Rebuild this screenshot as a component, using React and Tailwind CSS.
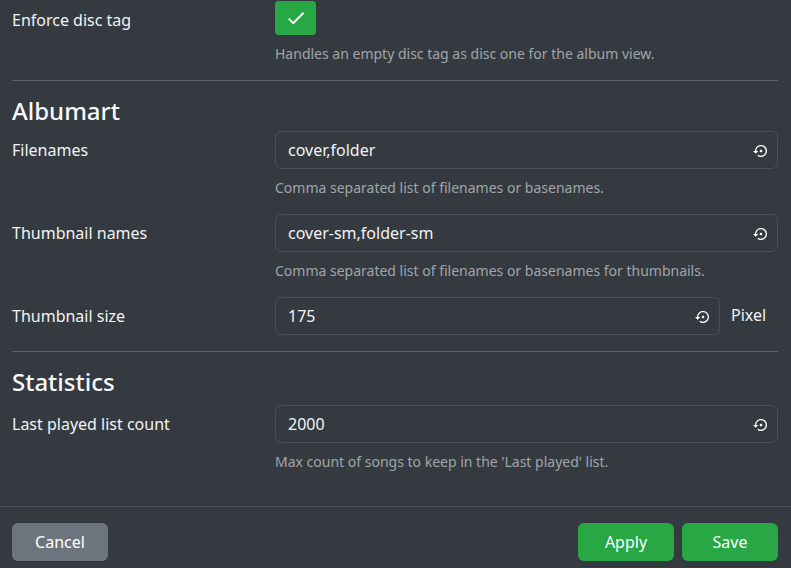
const font = { fontFamily: '"Noto Sans", sans-serif' };

function RestoreIcon() {
  return (
    <svg viewBox="0 0 24 24" className="w-4 h-4 fill-white shrink-0 translate-y-[1px]">
      <path d="M14 12c0-1.1-.9-2-2-2s-2 .9-2 2 .9 2 2 2 2-.9 2-2zm-2-9c-4.97 0-9 4.03-9 9H0l4 4 4-4H5c0-3.87 3.13-7 7-7s7 3.13 7 7-3.13 7-7 7c-1.51 0-2.91-.49-4.06-1.3l-1.42 1.44C8.04 20.3 9.94 21 12 21c4.97 0 9-4.03 9-9s-4.03-9-9-9z" />
    </svg>
  );
}

function Field({ label, value, help, unit }) {
  return (
    <div className="flex">
      <div className="w-[263px] shrink-0 h-[38px] flex items-center">{label}</div>
      <div className="flex-1 min-w-0">
        <div className="flex items-center">
          <div className="flex-1 h-[38px] flex items-center justify-between pl-[12px] pr-[8px] rounded-[6px] border border-[#495057] bg-[#343a40]">
            <span>{value}</span>
            <RestoreIcon />
          </div>
          {unit && <span className="w-[58px] pl-[11px] shrink-0 -translate-y-px">{unit}</span>}
        </div>
        {help && <div className="mt-[8px] text-[14px] leading-[21px] text-[#a1a5a9]">{help}</div>}
      </div>
    </div>
  );
}

export default function App() {
  return (
    <div style={font} className="h-[568px] w-[791px] overflow-hidden flex flex-col bg-[#343a40] text-[#f1f3f4] text-[16px] leading-[24px]">
      <div className="flex-1 min-h-0 overflow-hidden pl-[12px] pr-[13px] pt-[1px]">
        <div className="flex">
          <div className="w-[263px] shrink-0 h-[38px] flex items-center">Enforce disc tag</div>
          <div className="flex-1">
            <div className="w-[41px] h-[34px] rounded-[4px] bg-[#28a745] flex items-center justify-center">
              <svg viewBox="0 0 24 24" className="w-[22px] h-[22px] fill-white">
                <path d="M9 16.17 4.83 12l-1.42 1.41L9 19 21 7l-1.41-1.41z" />
              </svg>
            </div>
            <div className="mt-[8px] text-[14px] leading-[21px] text-[#a1a5a9]">
              Handles an empty disc tag as disc one for the album view.
            </div>
          </div>
        </div>
        <hr className="mt-[16px] border-t border-[#5c6166]" />
        <h3 className="mt-[15px] mb-[6px] text-[24px] leading-[29px] font-medium text-[#f8f9fa]">Albumart</h3>
        <div className="mt-[5px]">
          <Field label="Filenames" value="cover,folder" help="Comma separated list of filenames or basenames." />
        </div>
        <div className="mt-[16px]">
          <Field label="Thumbnail names" value="cover-sm,folder-sm" help="Comma separated list of filenames or basenames for thumbnails." />
        </div>
        <div className="mt-[16px]">
          <Field label="Thumbnail size" value="175" unit="Pixel" />
        </div>
        <hr className="mt-[16px] border-t border-[#5c6166]" />
        <h3 className="mt-[15px] text-[24px] leading-[29px] font-medium text-[#f8f9fa]">Statistics</h3>
        <div className="mt-[9px]">
          <Field label="Last played list count" value="2000" help="Max count of songs to keep in the 'Last played' list." />
        </div>
      </div>
      <div className="h-[62px] shrink-0 border-t border-[#4b5056] px-[12px] pt-[16px] flex justify-between items-start">
        <button className="w-[96px] h-[38px] rounded-[6px] bg-[#6c757d] text-white">Cancel</button>
        <div className="flex gap-[8px] mr-[1px]">
          <button className="w-[96px] h-[38px] rounded-[6px] bg-[#28a745] text-white">Apply</button>
          <button className="w-[96px] h-[38px] rounded-[6px] bg-[#28a745] text-white">Save</button>
        </div>
      </div>
    </div>
  );
}
